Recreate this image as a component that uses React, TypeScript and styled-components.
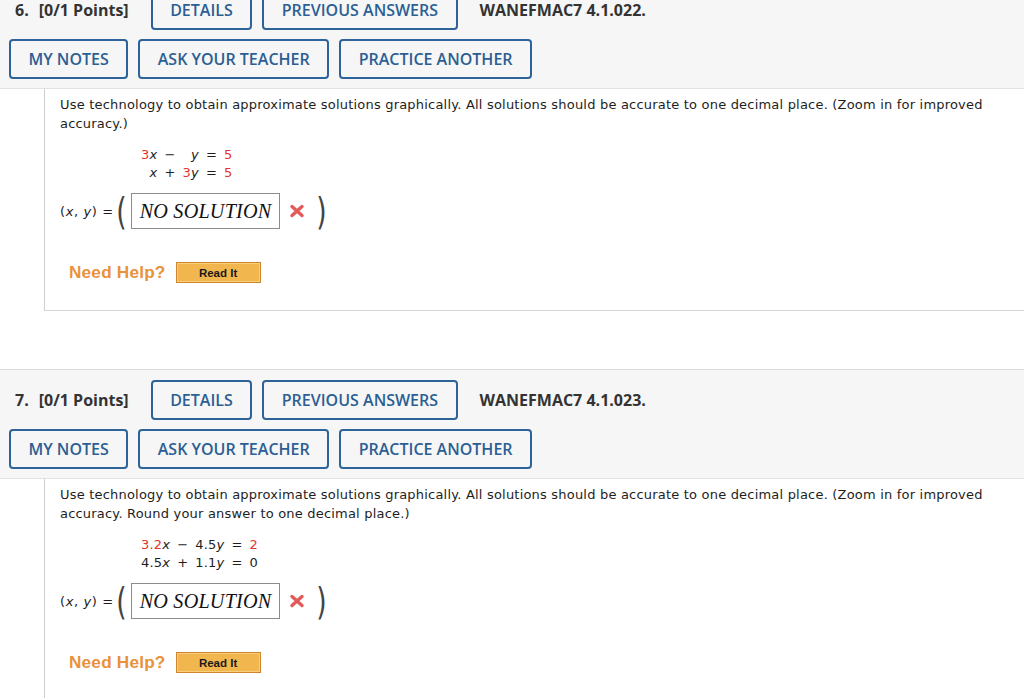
import React from "react";
import styled, { createGlobalStyle } from "styled-components";

const Global = createGlobalStyle`
  html, body { margin: 0; padding: 0; background: #fff; }
  body { font-family: "Open Sans", "Liberation Sans", sans-serif; overflow: hidden; }
`;

const Page = styled.div`
  margin-top: -21px;
  display: flex;
  flex-direction: column;
  gap: 58px;
`;

const Question = styled.section`
  display: flex;
  flex-direction: column;
`;

const Header = styled.div`
  background: #f6f6f6;
  border-top: 1px solid #dcdcdc;
  border-bottom: 1px solid #e2e2e2;
  padding: 10px 10px 9px 9px;
  display: flex;
  flex-direction: column;
  gap: 9px;
`;

const HeaderRow = styled.div`
  display: flex;
  align-items: center;
  gap: 10px;
`;

const Label = styled.span`
  font-family: "Open Sans", sans-serif;
  font-weight: 700;
  font-size: 16px;
  color: #333;
  padding-left: 6px;
  margin-right: 12px;
  white-space: nowrap;
`;

const Num = styled.span`
  margin-right: 10px;
`;

const NavButton = styled.button`
  height: 40px;
  box-sizing: border-box;
  padding: 0 17.5px;
  border: 2px solid #2e6399;
  border-radius: 4px;
  background: transparent;
  color: #2b5f94;
  font-family: "Open Sans", sans-serif;
  font-weight: 600;
  font-size: 16px;
  white-space: nowrap;
  cursor: pointer;
`;

const Code = styled.span`
  font-family: "Open Sans", sans-serif;
  font-weight: 700;
  font-size: 16px;
  color: #333;
  margin-left: 12px;
  white-space: nowrap;
`;

const Body = styled.div<{ $open?: boolean }>`
  margin-left: 44px;
  border-left: 1px solid #cfcfcf;
  border-bottom: ${(p) => (p.$open ? "none" : "1px solid #d6d6d6")};
  padding: 6px 30px 27px 15px;
  font-family: "DejaVu Sans", Verdana, sans-serif;
  font-size: 13px;
  letter-spacing: 0.2px;
  line-height: 19px;
  color: #1e1e1e;
`;

const Prompt = styled.p`
  margin: 0;
`;

const EqGrid = styled.div`
  display: inline-grid;
  grid-template-columns: repeat(5, auto);
  column-gap: 7px;
  line-height: 18px;
  margin: 13px 0 0 81px;
`;

const Cell = styled.span<{ $align?: string }>`
  justify-self: ${(p) => p.$align || "start"};
  white-space: nowrap;
`;

const Var = styled.i`
  font-style: italic;
`;

const Red = styled.span`
  color: #e4352c;
`;

const AnswerRow = styled.div`
  display: flex;
  align-items: center;
  height: 40px;
  margin-top: 9px;
`;

const Lhs = styled.span`
  letter-spacing: 0.6px;
`;

const Paren = styled.span<{ $gap: number }>`
  font-family: "DejaVu Sans", sans-serif;
  font-size: 38px;
  line-height: 40px;
  color: #444;
  margin-left: ${(p) => p.$gap}px;
  transform: scaleX(0.7);
  display: inline-block;
`;

const AnswerBox = styled.div`
  height: 36px;
  box-sizing: border-box;
  border: 1px solid #8c8c8c;
  padding: 0 8px;
  margin-left: 2px;
  display: flex;
  align-items: center;
  font-family: "Liberation Serif", serif;
  font-style: italic;
  font-size: 20.2px;
  color: #111;
  white-space: nowrap;
`;

const Wrong = styled.svg`
  margin-left: 9px;
  flex: none;
`;

const HelpRow = styled.div`
  display: flex;
  align-items: center;
  gap: 10px;
  margin-top: 31px;
  padding-left: 9px;
`;

const HelpText = styled.span`
  font-family: "Liberation Sans", Arial, sans-serif;
  font-weight: 700;
  font-size: 17.2px;
  color: #e8923c;
`;

const ReadIt = styled.button`
  width: 85px;
  height: 21px;
  box-sizing: border-box;
  border: 1px solid #cf842e;
  box-shadow: inset 0 0 0 1px #f8cf7c;
  background: #f2b64f;
  font-family: "Liberation Sans", Arial, sans-serif;
  font-weight: 700;
  font-size: 11.5px;
  color: #1a1a1a;
  padding: 0;
  cursor: pointer;
`;

type Eq = [React.ReactNode, string, React.ReactNode, React.ReactNode][];

const XMark = () => (
  <Wrong width="16" height="14" viewBox="0 0 16 14">
    <path d="M3 2.5 L13 11.5 M13 2.5 L3 11.5" stroke="#e25a5a" strokeWidth="3.4" strokeLinecap="round" />
  </Wrong>
);

function QuestionBlock(props: {
  num: number;
  code: string;
  prompt: string;
  eqs: Eq;
  open?: boolean;
}) {
  return (
    <Question>
      <Header>
        <HeaderRow>
          <Label>
            <Num>{props.num}.</Num>[0/1 Points]
          </Label>
          <NavButton>DETAILS</NavButton>
          <NavButton>PREVIOUS ANSWERS</NavButton>
          <Code>{props.code}</Code>
        </HeaderRow>
        <HeaderRow>
          <NavButton>MY NOTES</NavButton>
          <NavButton>ASK YOUR TEACHER</NavButton>
          <NavButton>PRACTICE ANOTHER</NavButton>
        </HeaderRow>
      </Header>
      <Body $open={props.open}>
        <Prompt>{props.prompt}</Prompt>
        <EqGrid>
          {props.eqs.map((row, i) => (
            <React.Fragment key={i}>
              <Cell $align="end">{row[0]}</Cell>
              <Cell $align="center">{row[1]}</Cell>
              <Cell $align="end">{row[2]}</Cell>
              <Cell $align="center">=</Cell>
              <Cell>{row[3]}</Cell>
            </React.Fragment>
          ))}
        </EqGrid>
        <AnswerRow>
          <Lhs>
            (<Var>x</Var>, <Var>y</Var>) =
          </Lhs>
          <Paren $gap={0}>(</Paren>
          <AnswerBox>NO SOLUTION</AnswerBox>
          <XMark />
          <Paren $gap={9}>)</Paren>
        </AnswerRow>
        <HelpRow>
          <HelpText>Need Help?</HelpText>
          <ReadIt>Read It</ReadIt>
        </HelpRow>
      </Body>
    </Question>
  );
}

export default function App() {
  return (
    <>
      <Global />
      <Page>
        <QuestionBlock
          num={6}
          code="WANEFMAC7 4.1.022."
          prompt="Use technology to obtain approximate solutions graphically. All solutions should be accurate to one decimal place. (Zoom in for improved accuracy.)"
          eqs={[
            [<><Red>3</Red><Var>x</Var></>, "−", <Var>y</Var>, <Red>5</Red>],
            [<Var>x</Var>, "+", <><Red>3</Red><Var>y</Var></>, <Red>5</Red>],
          ]}
        />
        <QuestionBlock
          num={7}
          code="WANEFMAC7 4.1.023."
          open
          prompt="Use technology to obtain approximate solutions graphically. All solutions should be accurate to one decimal place. (Zoom in for improved accuracy. Round your answer to one decimal place.)"
          eqs={[
            [<><Red>3.2</Red><Var>x</Var></>, "−", <>4.5<Var>y</Var></>, <Red>2</Red>],
            [<>4.5<Var>x</Var></>, "+", <>1.1<Var>y</Var></>, "0"],
          ]}
        />
      </Page>
    </>
  );
}
